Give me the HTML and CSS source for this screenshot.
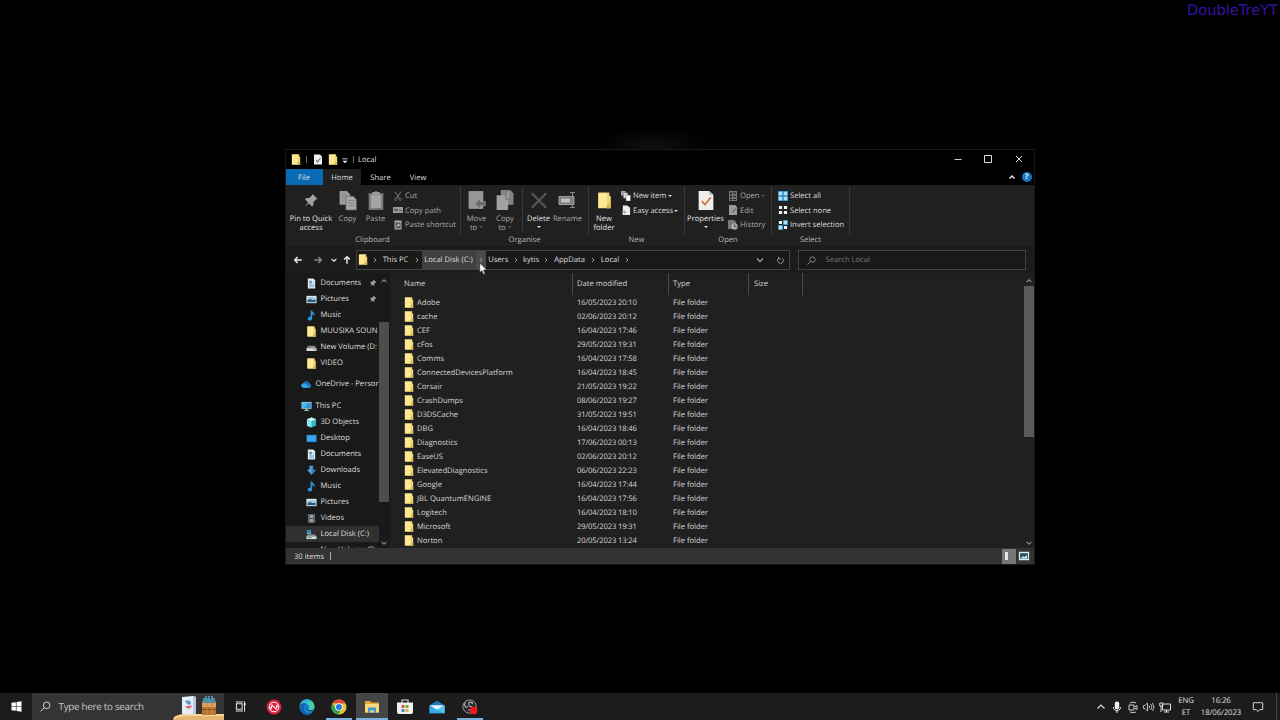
FILE: index.html
```html
<!DOCTYPE html>
<html lang="en">
<head>
<meta charset="utf-8">
<title>Local</title>
<link rel="stylesheet" href="styles.css">
</head>
<body>
<svg class="defs" width="0" height="0">
  <symbol id="folder" viewBox="0 0 10 11"><path d="M.8.2h7.400v2.200l1 .3v8H.8z" fill="#f0d676"/><path d="M1 .8h5.600v9.400H1z" fill="#fde995"/><path d="M7 8h2.200v2.700H6z" fill="#d9b64c"/></symbol>
  <symbol id="doc" viewBox="0 0 12 12"><path d="M2 .5h6l2 2v9H2z" fill="#e6eef3"/><path d="M3.500 3h3v3h-3zM7.500 4h1.500v1H7.500zM3.500 7.200H9v1H3.500zM3.500 9.200H9v1H3.500z" fill="#5a9cc4"/></symbol>
  <symbol id="picture" viewBox="0 0 12 12"><path d="M.5 2h11v8H.5z" fill="#e8eef2"/><path d="M1.500 3h9v6h-9z" fill="#a9cfe6"/><path d="m1.500 7 3-2 2 1.500 4-.6V9h-9z" fill="#2e5d80"/></symbol>
  <symbol id="music" viewBox="0 0 12 12"><path d="M5 .5h1.800c0 2 3.400 2.700 3 6.200C9.200 5.300 8 5 6.800 5v4.400a2.500 2.100 0 1 1-1.800-2z" fill="#2a93d8"/></symbol>
  <symbol id="drive" viewBox="0 0 12 12"><path d="M2.500 4h7l2 3H.5z" fill="#8b8b8b"/><path d="M.5 6.800h11v3H.5z" fill="#dedede"/><path d="M8.500 8h2v.8h-2z" fill="#478"/></symbol>
  <symbol id="cdrive" viewBox="0 0 12 12"><path d="M1 1h2v2H1zM3.500 1h2v2h-2z" fill="#36a9df"/><path d="M1 3.500h2v2H1zM3.500 3.500h2v2h-2z" fill="#62c5ed"/><path d="M2 6h7l2.500 2H.5z" fill="#8c9c98"/><path d="M.5 8h11v3H.5z" fill="#cfe2da"/><path d="M2 9h4v1H2z" fill="#37806b"/></symbol>
  <symbol id="cloud" viewBox="0 0 12 12"><path d="M3 9.500a2.500 2.500 0 0 1-.3-5 3.500 3.500 0 0 1 6.500 0A2.600 2.600 0 0 1 9.500 9.500z" fill="#1370b8"/><path d="M3 9.500a2.500 2.500 0 0 1-.3-5c2 0 4 1.800 7.500 4.900z" fill="#36a8ea"/></symbol>
  <symbol id="pc" viewBox="0 0 12 12"><path d="M.5 1h11v7.500H.5z" fill="#a7cfe0"/><path d="M1.300 1.800h9.400V7.600H1.300z" fill="#2b95d6"/><path d="M1.300 1.800h6l-4 5.800h-2z" fill="#55b8ee"/><path d="M5 8.500h2V10h2v1H3v-1h2z" fill="#a9c3cf"/></symbol>
  <symbol id="cube" viewBox="0 0 12 12"><path d="m1 2.500 5-2 5 2v7l-5 2-5-2z" fill="#2bb5bd"/><path d="m1 2.500 5 2v7l-5-2z" fill="#8ce4e4"/><path d="m1 2.500 5-2 5 2-5 2z" fill="#d5f8f5"/></symbol>
  <symbol id="desktop" viewBox="0 0 12 12"><path d="M.5 2h11v8H.5z" fill="#1d80ce"/><path d="M1 2.500h10V9H1z" fill="#37a5ec"/></symbol>
  <symbol id="down" viewBox="0 0 12 12"><path d="M4 .8h4v4.500H11.200L6 11 .8 5.300H4z" fill="#3784be"/><path d="M4 .8h2V10L1.800 5.300H4z" fill="#5ba9dd"/></symbol>
  <symbol id="video" viewBox="0 0 12 12"><path d="M2 1h8v10H2z" fill="#484d54"/><path d="M4 2h4v3.500H4zM4 6.500h4V10H4z" fill="#92a2ad"/><path d="M2.500 2h.8v1h-.8zm0 3h.8v1h-.8zm0 3h.8v1h-.8zM8.700 2h.8v1h-.8zm0 3h.8v1h-.8zm0 3h.8v1h-.8z" fill="#bbb"/></symbol>
  <symbol id="pin" viewBox="0 0 16 16"><path d="m9.500 1.500 5 5-1.500.6-2.500 2.500v3L9 14 5.900 10.900 1.500 14.500l3.600-4.400L2 7l1.400-1.500h3l2.500-2.500z" fill="#a1a1a1"/></symbol>
  <symbol id="copy" viewBox="0 0 18 20"><path d="M1 1h7l3 3v10H1z" fill="#9b9b9b"/><path d="M7 6h7l3 3v10H7z" fill="#a8a8a8" stroke="#666" stroke-width=".7"/><path d="M9 10h6M9 12.500h6M9 15h6M3 4h5M3 6.500h3" stroke="#828282" stroke-width=".8"/></symbol>
  <symbol id="paste" viewBox="0 0 16 20"><path d="M1 3h14v16H1z" fill="#777"/><path d="M3 5h10v12H3z" fill="#a4a4a4"/><path d="M4.500 2h2.300q1.200-2 2.400 0h2.300v3h-7z" fill="#999"/></symbol>
  <symbol id="cut" viewBox="0 0 10 10"><path d="m2 .5 4.500 7M8 .5l-4.500 7" stroke="#777" fill="none"/><circle cx="2.700" cy="8.300" r="1.200" fill="none" stroke="#777" stroke-width=".8"/><circle cx="7.300" cy="8.300" r="1.200" fill="none" stroke="#777" stroke-width=".8"/></symbol>
  <symbol id="path" viewBox="0 0 10 10"><path d="M0 2h10v6H0z" fill="#999"/><path d="m1.500 4 .8 2 .8-2 .8 2 .8-2M6 5.500h3" stroke="#444" fill="none" stroke-width=".8"/></symbol>
  <symbol id="shortcut" viewBox="0 0 10 10"><path d="M1.500.5h7v9h-7z" fill="#aaa"/><path d="M2.500 2.500h5v5.800h-5z" fill="#555"/><path d="M3.200 7.500c0-2 1-3 2.200-3v-1L7 5 5.400 6.500v-1c-1 0-1.500.7-2.200 2z" fill="#ddd"/></symbol>
  <symbol id="moveto" viewBox="0 0 18 20"><path d="M1 1h14v17H1z" fill="#969696"/><path d="m7 13 5-5v3h5v4h-5v3z" fill="#6a6a6a" stroke="#aaa" stroke-width=".5"/></symbol>
  <symbol id="copyto" viewBox="0 0 18 20"><path d="M5 0h9l3 3v11H5z" fill="#858585"/><path d="M1 5h8l3 3v11H1z" fill="#a1a1a1"/><path d="M10 1h4v8h-4z" fill="#999" stroke="#666" stroke-width=".6"/></symbol>
  <symbol id="delete" viewBox="0 0 18 18"><path d="m2.500 2.500 13 13M15.500 2.500l-13 13" stroke="#555" stroke-width="2"/></symbol>
  <symbol id="rename" viewBox="0 0 20 18"><path d="M1 5h15v8H1z" fill="#777" stroke="#a2a2a2"/><path d="M3 7h9v4H3z" fill="#c1c1c1"/><path d="M12 1h5M14.500 1v15M12 16h5" stroke="#888" stroke-width="1.200"/></symbol>
  <symbol id="newitem" viewBox="0 0 11 11"><path d="M0 0h5v5H0z" fill="#aaa"/><path d="M2.500 2h5v6h-5z" fill="#ddd" stroke="#555" stroke-width=".5"/><path d="M5.500 4.500h5V11h-5z" fill="#fff" stroke="#555" stroke-width=".5"/></symbol>
  <symbol id="easy" viewBox="0 0 11 11"><path d="M2 .5h5l3 2.500v8H2z" fill="#eee"/><path d="M1 10c0-3 2-3 3-3V5.500L6 8 4 10V9C3 9 2 9 1 10z" fill="#aaa"/></symbol>
  <symbol id="props" viewBox="0 0 16 20"><path d="M1 1h10l4 3.500V19H1z" fill="#f2eeeb"/><path d="M11 1v3.500h4" fill="#bbb"/><path d="m4 10.500 3 3.500 5.500-7" fill="none" stroke="#d37548" stroke-width="1.700"/></symbol>
  <symbol id="open" viewBox="0 0 10 10"><path d="M1 0h8v10H1z" fill="#777"/><path d="M2 1.500h2v2H2zm0 3.200h2v2H2zM2 8h2v1.300H2zM5 1.500h3v1.300H5zm0 3.200h3v1.300H5zM5 8h3v1H5z" fill="#222"/></symbol>
  <symbol id="edit" viewBox="0 0 10 10"><path d="M1 0h6l2 2v8H1z" fill="#999"/><path d="m3 9 1-3 4-4 1.500 1.500-4 4z" fill="#777" stroke="#bbb" stroke-width=".4"/></symbol>
  <symbol id="history" viewBox="0 0 10 10"><path d="M0 0h6l2 2v7H0z" fill="#777"/><circle cx="6.500" cy="6.500" r="3.200" fill="#aaa"/><path d="M6.500 4.500v2h2" fill="none" stroke="#333" stroke-width=".7"/></symbol>
  <symbol id="selall" viewBox="0 0 11 11"><path d="M0 0h11v11H0z" fill="#2a89c0"/><path d="M.8.8h3.900v3.900H.8zM6.300.8h3.900v3.900H6.300zM.8 6.300h3.900v3.900H.8zM6.300 6.300h3.900v3.900H6.300z" fill="#b2e1f6"/></symbol>
  <symbol id="selnone" viewBox="0 0 11 11"><path d="M1 1h3.500v3.500H1zM6.500 1H10v3.500H6.500zM1 6.500h3.500V10H1zM6.500 6.500H10V10H6.500z" fill="#f0f0f0"/></symbol>
  <symbol id="selinv" viewBox="0 0 11 11"><path d="M5.500 0H11v5.500H5.500zM0 5.500h5.500V11H0z" fill="#2a89c0"/><path d="M1 1h3.500v3.500H1zM6.500 6.500H10V10H6.500z" fill="#f0f0f0"/><path d="M6.300.8h3.900v3.900H6.300zM.8 6.300h3.900v3.900H.8z" fill="#b2e1f6"/></symbol>
  <symbol id="left" viewBox="0 0 12 12"><path d="M10.500 6H2.200M5.500 2.500 2 6l3.500 3.500" fill="none" stroke="currentColor" stroke-width="1.700"/></symbol>
  <symbol id="cdown" viewBox="0 0 10 10"><path d="m2 3.500 3 3 3-3" fill="none" stroke="currentColor" stroke-width="1.400"/></symbol>
  <symbol id="sep" viewBox="0 0 10 10"><path d="m4 3 2 2-2 2" fill="none" stroke="currentColor"/></symbol>
  <symbol id="lens" viewBox="0 0 12 12"><circle cx="7.300" cy="4.700" r="3.600" fill="none" stroke="currentColor"/><path d="m4.700 7.300-4 4" stroke="currentColor"/></symbol>
</svg>

<div class="screen">
  <div class="glow"></div>
  <div class="watermark">DoubleTreYT</div>

  <main class="window">
    <header class="titlebar">
      <svg class="i10 t1"><use href="#folder"/></svg>
      <i class="tsep"></i>
      <svg class="i10 t2" viewBox="0 0 10 11"><path d="M1 .5h6l2 2v8H1z" fill="#f3eff0"/><path d="m3 6 1.500 2L7.500 4" fill="none" stroke="#866" stroke-width="1.100"/></svg>
      <svg class="i10 t3"><use href="#folder"/></svg>
      <svg class="t4" viewBox="0 0 6 6"><path d="M.5.800h5" stroke="#ddd" stroke-width=".9"/><path d="M.5 2.700h5L3 5.200z" fill="#eee"/></svg>
      <i class="tsep t5"></i>
      <span class="title">Local</span>
      <div class="winbtns">
        <svg viewBox="0 0 10 10"><path d="M1.500 5.500h7" stroke="#ccc"/></svg>
        <svg viewBox="0 0 10 10"><path d="M1.500 1.500h7v7h-7z" fill="none" stroke="#ddd"/></svg>
        <svg viewBox="0 0 10 10"><path d="m2 2 6 6M8 2 2 8" stroke="#ddd"/></svg>
      </div>
    </header>

    <nav class="tabs">
      <span class="tab file">File</span><span class="tab home">Home</span><span class="tab">Share</span><span class="tab view">View</span>
      <div class="help">
        <svg viewBox="0 0 10 10"><path d="m2.500 6.500 2.500-2.500 2.500 2.500" fill="none" stroke="#ddd" stroke-width="1.500"/></svg>
        <span class="q">?</span>
      </div>
    </nav>

    <section class="ribbon">
      <div class="group g1">
        <div class="tools">
          <div class="big lit"><svg class="bpin"><use href="#pin"/></svg><span>Pin to Quick</span><span>access</span></div>
          <div class="big"><svg><use href="#copy"/></svg><span>Copy</span></div>
          <div class="big"><svg><use href="#paste"/></svg><span>Paste</span></div>
          <div class="small dim"><p><svg><use href="#cut"/></svg>Cut</p><p><svg><use href="#path"/></svg>Copy path</p><p><svg><use href="#shortcut"/></svg>Paste shortcut</p></div>
        </div>
        <div class="glabel">Clipboard</div>
      </div>
      <div class="group g2">
        <div class="tools">
          <div class="big"><svg><use href="#moveto"/></svg><span>Move</span><span>to <b class="car off"></b></span></div>
          <div class="big"><svg><use href="#copyto"/></svg><span>Copy</span><span>to <b class="car off"></b></span></div>
          <i class="gsep"></i>
          <div class="big lit"><svg><use href="#delete"/></svg><span>Delete</span><span><b class="car"></b></span></div>
          <div class="big"><svg><use href="#rename"/></svg><span>Rename</span></div>
        </div>
        <div class="glabel">Organise</div>
      </div>
      <div class="group g3">
        <div class="tools">
          <div class="big lit"><svg class="bfolder"><use href="#folder"/></svg><span>New</span><span>folder</span></div>
          <div class="small"><p><svg><use href="#newitem"/></svg>New item <b class="car"></b></p><p><svg><use href="#easy"/></svg>Easy access <b class="car"></b></p></div>
        </div>
        <div class="glabel">New</div>
      </div>
      <div class="group g4">
        <div class="tools">
          <div class="big lit"><svg><use href="#props"/></svg><span>Properties</span><span><b class="car"></b></span></div>
          <div class="small dim"><p><svg><use href="#open"/></svg>Open <b class="car off"></b></p><p><svg><use href="#edit"/></svg>Edit</p><p><svg><use href="#history"/></svg>History</p></div>
        </div>
        <div class="glabel">Open</div>
      </div>
      <div class="group g5">
        <div class="tools">
          <div class="small"><p><svg><use href="#selall"/></svg>Select all</p><p><svg><use href="#selnone"/></svg>Select none</p><p><svg><use href="#selinv"/></svg>Invert selection</p></div>
        </div>
        <div class="glabel">Select</div>
      </div>
    </section>

    <section class="address">
      <div class="navs">
        <svg><use href="#left"/></svg><svg class="fwd"><use href="#left"/></svg><svg class="recent"><use href="#cdown"/></svg><svg class="up"><use href="#left"/></svg>
      </div>
      <div class="crumbs">
        <svg class="i10"><use href="#folder"/></svg>
        <svg class="s"><use href="#sep"/></svg><span class="c1">This PC</span>
        <svg class="s"><use href="#sep"/></svg><span class="c2">Local Disk (C:)</span>
        <svg class="s hot"><use href="#sep"/></svg><span class="c3">Users</span>
        <svg class="s"><use href="#sep"/></svg><span class="c4">kytis</span>
        <svg class="s"><use href="#sep"/></svg><span class="c5">AppData</span>
        <svg class="s"><use href="#sep"/></svg><span class="c6">Local</span>
        <svg class="s"><use href="#sep"/></svg>
        <svg class="drop"><use href="#cdown"/></svg>
        <svg class="refresh" viewBox="0 0 10 10"><path d="M3 2.500a3.200 3.200 0 1 0 4 0M3 .8v2.400h2.400" fill="none" stroke="#999" stroke-width="1.100"/></svg>
      </div>
      <div class="search"><svg><use href="#lens"/></svg>Search Local</div>
    </section>

    <section class="content">
      <aside class="side">
        <div class="tree">
          <p><svg><use href="#doc"/></svg>Documents<svg class="pinned"><use href="#pin"/></svg></p>
          <p><svg><use href="#picture"/></svg>Pictures<svg class="pinned"><use href="#pin"/></svg></p>
          <p><svg><use href="#music"/></svg>Music</p>
          <p><svg><use href="#folder"/></svg>MUUSIKA SOUN</p>
          <p><svg><use href="#drive"/></svg>New Volume (D:</p>
          <p><svg><use href="#folder"/></svg>VIDEO</p>
          <p class="root r1"><svg><use href="#cloud"/></svg>OneDrive - Persor</p>
          <p class="root r2"><svg><use href="#pc"/></svg>This PC</p>
          <p><svg><use href="#cube"/></svg>3D Objects</p>
          <p><svg><use href="#desktop"/></svg>Desktop</p>
          <p><svg><use href="#doc"/></svg>Documents</p>
          <p><svg><use href="#down"/></svg>Downloads</p>
          <p><svg><use href="#music"/></svg>Music</p>
          <p><svg><use href="#picture"/></svg>Pictures</p>
          <p><svg><use href="#video"/></svg>Videos</p>
          <p class="sel"><svg><use href="#cdrive"/></svg>Local Disk (C:)</p>
          <p class="last"><svg></svg>New Volume (D:</p>
        </div>
        <div class="bar sbar"><svg class="flip"><use href="#cdown"/></svg><i></i><svg><use href="#cdown"/></svg></div>
      </aside>
      <div class="list">
        <div class="row head"><span>Name</span><span>Date modified</span><span>Type</span><span>Size</span></div>
        <div class="row"><span><svg><use href="#folder"/></svg>Adobe</span><span>16/05/2023 20:10</span><span>File folder</span></div>
        <div class="row"><span><svg><use href="#folder"/></svg>cache</span><span>02/06/2023 20:12</span><span>File folder</span></div>
        <div class="row"><span><svg><use href="#folder"/></svg>CEF</span><span>16/04/2023 17:46</span><span>File folder</span></div>
        <div class="row"><span><svg><use href="#folder"/></svg>cFos</span><span>29/05/2023 19:31</span><span>File folder</span></div>
        <div class="row"><span><svg><use href="#folder"/></svg>Comms</span><span>16/04/2023 17:58</span><span>File folder</span></div>
        <div class="row"><span><svg><use href="#folder"/></svg>ConnectedDevicesPlatform</span><span>16/04/2023 18:45</span><span>File folder</span></div>
        <div class="row"><span><svg><use href="#folder"/></svg>Corsair</span><span>21/05/2023 19:22</span><span>File folder</span></div>
        <div class="row"><span><svg><use href="#folder"/></svg>CrashDumps</span><span>08/06/2023 19:27</span><span>File folder</span></div>
        <div class="row"><span><svg><use href="#folder"/></svg>D3DSCache</span><span>31/05/2023 19:51</span><span>File folder</span></div>
        <div class="row"><span><svg><use href="#folder"/></svg>DBG</span><span>16/04/2023 18:46</span><span>File folder</span></div>
        <div class="row"><span><svg><use href="#folder"/></svg>Diagnostics</span><span>17/06/2023 00:13</span><span>File folder</span></div>
        <div class="row"><span><svg><use href="#folder"/></svg>EaseUS</span><span>02/06/2023 20:12</span><span>File folder</span></div>
        <div class="row"><span><svg><use href="#folder"/></svg>ElevatedDiagnostics</span><span>06/06/2023 22:23</span><span>File folder</span></div>
        <div class="row"><span><svg><use href="#folder"/></svg>Google</span><span>16/04/2023 17:44</span><span>File folder</span></div>
        <div class="row"><span><svg><use href="#folder"/></svg>JBL QuantumENGINE</span><span>16/04/2023 17:56</span><span>File folder</span></div>
        <div class="row"><span><svg><use href="#folder"/></svg>Logitech</span><span>16/04/2023 18:10</span><span>File folder</span></div>
        <div class="row"><span><svg><use href="#folder"/></svg>Microsoft</span><span>29/05/2023 19:31</span><span>File folder</span></div>
        <div class="row"><span><svg><use href="#folder"/></svg>Norton</span><span>20/05/2023 13:24</span><span>File folder</span></div>
      </div>
      <div class="bar lbar"><svg class="flip"><use href="#cdown"/></svg><i></i><svg><use href="#cdown"/></svg></div>
    </section>

    <footer class="status">
      <span>30 items</span><i></i>
      <div class="views"><b><svg viewBox="0 0 14 14"><path d="M3 3h3v8H3z" fill="#e4e4e4"/></svg></b><svg viewBox="0 0 12 12"><path d="M1.500 2.500h9v7h-9z" fill="#264b5b" stroke="#dcebf0" stroke-width="1.300"/><path d="m3 8 2-2 1.500 1L9 5v3.500H3z" fill="#cfe8ee"/></svg></div>
    </footer>
  </main>

  <svg class="cursor" viewBox="0 0 9 14"><path d="M.7.7v10l2.200-2 1.600 3.800 1.700-.7-1.600-3.700h3.100z" fill="#fff" stroke="#222" stroke-width=".7"/></svg>

  <footer class="taskbar">
    <div class="start"><svg viewBox="0 0 12 12"><path d="m.5 2 4.800-.7v4.300H.5zM6 1.200 11.500.4v5.200H6zM.5 6.300h4.800v4.400l-4.800-.7zM6 6.300h5.500v5.300L6 10.800z" fill="#fff"/></svg></div>
    <div class="find"><svg class="lens"><use href="#lens"/></svg><span>Type here to search</span>
      <svg class="art" viewBox="0 0 52 27"><path d="M1 27c0-4 6-6 14-6h37v6z" fill="#e3b673"/><path d="M2 24c4-2 8-3 13-3h37v2H16C9 23 6 24 2 26z" fill="#f8d89a"/><path d="m10 4 11-1 3 1v17H10z" fill="#e5edf7"/><path d="M21 3l3 1v17h-3z" fill="#bcc7dd"/><path d="M13 8c3-2 6 0 6 2s-3 2-4 1z" fill="#5b9bd0"/><path d="M13 13c2 4 6 3 7 0-2-2-3 1-7 0z" fill="#dc7373"/><path d="M30 8h14v14H30z" fill="#b87332"/><path d="M30 10h14v4H30z" fill="#e0a05a"/><path d="M30 16h14v1H30z" fill="#814b22"/><path d="M35 8v14M40 8v14" stroke="#c98543"/><path d="M31 10V5h2V3h2v2h1V3h2v3h1V3h2v2h2v5z" fill="#4f8fa9"/></svg>
    </div>
    <div class="app tv"><svg viewBox="0 0 16 16"><path d="M3 4.500h7v7H3zM3 1.500v1h7v-1M3 14.500v-1h7v1M13 1.500v13" fill="none" stroke="#ddd" stroke-width="1.300"/><path d="M12 4h2.200v2.500H12z" fill="#eee"/></svg></div>
    <div class="apps">
      <div class="app"><svg viewBox="0 0 16 16"><circle cx="8" cy="8" r="7.500" fill="#d8213f"/><circle cx="8" cy="8" r="4.800" fill="none" stroke="#fff"/><path d="m5 10.500 1-4.500 4 4 1-4.500M3.500 8.500h2M10.500 7.500h2" fill="none" stroke="#fff" stroke-width="1.100"/></svg></div>
      <div class="app"><svg viewBox="0 0 18 18"><circle cx="9" cy="9" r="8.500" fill="#1785d4"/><path d="M1 7C2 2 6 .5 9 .5c6 0 9 5 8.500 9-.5 3-6 4-7 2 3-3-1-7-5-6C3 6 2 6.500 1 7z" fill="#43d1a5"/><path d="M1 7C2 2 6 .5 9 .5c3 0 5 1 6.500 3-4-1-6 0-10 2C3 6 2 6.500 1 7z" fill="#32b5d8"/><path d="M.5 9c1-4 5-6 9-3-4 0-5 6-2 9 3 2 6 1 8-1-3 5-9 5-12 1.500C1 13.500.5 11 .5 9z" fill="#1763b2"/><path d="M8.500 7.500c-1 2 0 4 2 5 2 .8 4 .5 6-.5l-.8 1.500C10 14.500 6.500 11 8.500 7.500z" fill="#1a1f27"/></svg></div>
      <div class="app run"><svg viewBox="0 0 18 18"><circle cx="9" cy="9" r="8.500" fill="#eac235"/><path d="M1.600 4.700A8.500 8.500 0 0 1 16.400 5H9z" fill="#e0463c"/><path d="M1.600 4.700A8.500 8.500 0 0 0 8 17.500L12 11 5 10z" fill="#2fa350"/><circle cx="9" cy="9" r="4.300" fill="#fff"/><circle cx="9" cy="9" r="3.400" fill="#2e79df"/></svg></div>
      <div class="app run active"><svg viewBox="0 0 16 16"><path d="M1 2h5l1.500 1.500H15v10H1z" fill="#e2a72f"/><path d="M1 5h14v8.500H1z" fill="#f8d978"/><path d="M4 8.500h8V14h-2v-2.500H6V14H4z" fill="#4399d1"/></svg></div>
      <div class="app"><svg viewBox="0 0 16 16"><path d="M5 4V1h6v3" fill="none" stroke="#ddd" stroke-width="1.200"/><path d="M0 3.500h16V13q0 2-2 2H2q-2 0-2-2z" fill="#f0f2ec"/><path d="M4.500 6h3v3h-3z" fill="#dd5b40"/><path d="M8.500 6h3v3h-3z" fill="#70ad43"/><path d="M4.500 10h3v3h-3z" fill="#398fcb"/><path d="M8.500 10h3v3h-3z" fill="#e1b23e"/></svg></div>
      <div class="app"><svg viewBox="0 0 18 16"><path d="m.5 6 8.500-5 8.500 5v9H.5z" fill="#2079b8"/><path d="M2 6h14v4l-7 3-7-3z" fill="#edf5fa"/><path d="m.5 6 8.500 5 8.500-5v9H.5z" fill="#35a8e5"/><path d="m9 11 8.500-5v9z" fill="#58c4f0"/></svg></div>
      <div class="app run"><svg viewBox="0 0 18 18"><circle cx="8.500" cy="8.500" r="7.500" fill="#25242a" stroke="#aaa"/><path d="M8 7C6 2 12 3 12 6M7 8c-4 4-5-2-3-4M8 8c5 0 3 6-1 4" fill="none" stroke="#bbb" stroke-width="1.200"/><circle cx="13" cy="12.800" r="4.300" fill="#ec1b1b"/></svg></div>
    </div>
    <div class="tray">
      <svg viewBox="0 0 12 12"><path d="m2.500 7.500 3.500-3.500 3.500 3.500" fill="none" stroke="#ddd" stroke-width="1.200"/></svg>
      <svg viewBox="0 0 12 12"><rect x="3.800" y=".5" width="4.400" height="8" rx="2" fill="#eee"/><path d="M2.500 6c0 5 7 5 7 0M6 10v2" fill="none" stroke="#eee"/></svg>
      <svg viewBox="0 0 12 12"><path d="M2 4h5v5H2zM7.500 6 10 4.500v4L7.500 7M3 2q3-2 6 0M3 11q3 1.500 6 0" fill="none" stroke="#ccc"/></svg>
      <svg viewBox="0 0 12 12"><path d="M.5 4.500H2L4.500 2v8L2 7.500H.5zM6 4.500q1.200 1.500 0 3M7.700 3q2.500 3 0 6M9.500 2q3 4 0 8" fill="none" stroke="#ccc" stroke-width=".9"/></svg>
      <svg viewBox="0 0 12 12"><path d="M3.500 3h8v6h-8zM5 11h5M7.500 9v2M.8 2h3v3h-3zM2 5v6" fill="none" stroke="#ddd"/></svg>
      <div class="two lang"><span>ENG</span><span>ET</span></div>
      <div class="two clock"><span>16:26</span><span>18/06/2023</span></div>
      <svg class="note" viewBox="0 0 14 14"><path d="M1.500 2h11v8H9l-2 2.300L5 10H1.500z" fill="none" stroke="#ddd" stroke-width="1.100"/></svg>
    </div>
  </footer>
</div>
</body>
</html>
```
FILE: styles.css
```css
* { box-sizing: border-box; }
body { margin: 0; background: #000; }
p { margin: 0; }
svg { display: block; flex: none; overflow: visible; }
i { display: block; flex: none; }
.defs { position: absolute; }
.screen {
  position: relative; width: 1280px; height: 720px; overflow: hidden; background: #000;
  font: 7.6px/10px "Open Sans", "Noto Sans", sans-serif; color: #dedede;
  text-rendering: geometricPrecision; white-space: nowrap;
  display: flex; flex-direction: column; justify-content: space-between;
}
.glow { position: absolute; left: 592px; top: 126px; width: 122px; height: 40px; background: radial-gradient(ellipse, #0f0f0f, #000 70%); }
.watermark { position: absolute; right: 2px; top: 1px; font: 14.6px/20px "DejaVu Sans", sans-serif; color: #3512a4; }
.window {
  position: relative; width: 750px; height: 416px; margin: 149px 0 0 285px; background: #202020;
  outline: 1px solid #181818; outline-offset: -1px; display: flex; flex-direction: column; overflow: hidden;
}

.titlebar { height: 20px; background: #000; display: flex; align-items: center; }
.i10 { width: 10px; height: 11px; }
.t1 { margin-left: 6px; }
.tsep { width: 1px; height: 7px; background: #666; margin-left: 5px; }
.t2 { margin-left: 6px; }
.t3 { margin-left: 5px; }
.t4 { width: 6px; height: 6px; margin: 3px 0 0 4px; }
.t5 { margin-left: 5px; }
.title { margin: 1px 0 0 4px; }
.winbtns { margin-left: auto; display: flex; gap: 20.5px; padding-right: 11.5px; }
.winbtns svg { width: 10px; height: 10px; }

.tabs { height: 16px; background: #000; display: flex; line-height: 18px; }
.tab { width: 39px; height: 16px; text-align: center; }
.file { width: 38px; background: #0869b5; }
.home { background: #202020; width: 38px; }
.view { width: 36px; }
.help { margin-left: auto; display: flex; align-items: center; gap: 5px; padding-right: 3.5px; }
.help svg { width: 10px; height: 10px; }
.q { width: 10px; height: 10px; border-radius: 50%; background: #1677c4; color: #fff; font-weight: 700; line-height: 10px; text-align: center; }

.ribbon { height: 62px; display: flex; border-bottom: 1px solid #191919; }
.group { position: relative; display: flex; flex-direction: column; flex: none; }
.group::after { content: ""; position: absolute; right: 0; top: 2px; width: 1px; height: 48px; background: #383838; }
.g1 { width: 176px; } .g2 { width: 128px; } .g3 { width: 96px; } .g4 { width: 87px; } .g5 { width: 78px; }
.tools { height: 49px; display: grid; }
.g1 .tools { grid-template-columns: 52px 21px 35px auto; }
.g2 .tools { grid-template-columns: 31px 26px 5px 31px 27px; }
.g3 .tools { grid-template-columns: 30px auto; }
.g4 .tools { grid-template-columns: 41px auto; }
.glabel { text-align: center; line-height: 12px; padding: 1.6px 1px 0 0; color: #b5b5b5; }
.big { display: flex; flex-direction: column; align-items: center; padding-top: 5px; color: #aaa; line-height: 9px; min-width: 0; }
.big svg { width: 20px; height: 21px; margin-bottom: 3.5px; }
.big .bpin { width: 16px; }
.big .bfolder { width: 15px; }
.big span { min-height: 9px; }
.lit { color: #e2e2e2; }
.car { display: inline-block; border: 2px solid transparent; border-top-color: currentColor; border-bottom: 0; vertical-align: 2px; }
.off { color: #555; }
.gsep { width: 1px; height: 44px; margin-top: 3px; margin-left: 4px; background: #383838; }
.small { padding-top: 3.7px; }
.small p { height: 14.7px; display: flex; align-items: center; gap: 2px; line-height: 14px; }
.small svg { width: 10px; height: 10px; margin-bottom: 1px; }
.small .car { margin-left: -.5px; }
.g3 .small { padding-left: 2px; letter-spacing: -.08px; } .g4 .small { padding-left: 2px; } .g5 .small { padding-left: 6px; }
.dim { color: #aaa; }

.address { height: 26px; display: flex; align-items: center; background: #1c1c1c; }
.navs { width: 71px; display: flex; align-items: center; padding-left: 8px; }
.navs svg { width: 10px; height: 10px; color: #eee; }
.navs .fwd { transform: scaleX(-1); margin-left: 10px; color: #888; }
.navs .recent { width: 8px; height: 8px; margin-left: 7px; }
.navs .up { transform: rotate(90deg); margin-left: 4px; }
.crumbs { width: 434px; height: 20px; border: 1px solid #414141; background: #191919; display: flex; align-items: center; padding-left: 1px; line-height: 19px; }
.s { width: 10px; height: 18px; color: #999; }
.crumbs .i10 { margin: 0 1.5px 1px 0; }
.c1 { width: 32px; text-align: center; }
.c2 { width: 54px; height: 18px; text-align: center; background: #404040; }
.hot { background: #4b4b4b; }
.c3 { width: 25.5px; text-align: center; }
.c4 { width: 20px; text-align: center; }
.c5 { width: 37px; text-align: center; }
.c6 { width: 24px; text-align: center; }
.crumbs .drop { width: 10px; height: 10px; margin-left: auto; color: #999; }
.refresh { width: 9px; height: 9px; margin: 0 4px 0 11px; }
.search { width: 228px; height: 20px; margin-left: 8px; border: 1px solid #414141; background: #191919; display: flex; align-items: center; gap: 9.5px; padding-left: 8px; color: #777; line-height: 19px; }
.search svg { width: 9px; height: 9px; color: #aaa; }

.content { height: 275px; display: flex; overflow: hidden; }
.side { width: 105px; display: flex; background: #191919; flex: none; }
.tree { width: 94px; height: 275px; padding-top: 2px; overflow: hidden; }
.tree p { height: 16px; line-height: 16px; padding-left: 21px; display: flex; align-items: center; gap: 3.5px; overflow: hidden; }
.tree svg { width: 11px; height: 11px; }
.tree .root { padding-left: 16px; }
.r1 { margin-top: 5px; }
.r2 { margin-top: 6px; }
.tree .pinned { width: 8px; height: 8px; margin: 0 2px 0 auto; }
.sel { background: #303030; }
.bar { display: flex; flex-direction: column; align-items: center; padding: 4px 0 1px; }
.bar svg { width: 8px; height: 8px; color: #888; }
.flip { transform: scaleY(-1); }
.bar svg:last-child { margin-top: auto; }
.bar i { width: 10px; background: #4d4d4d; }
.sbar { width: 10px; }
.sbar i { height: 180px; margin-top: 37px; }
.lbar { width: 12px; margin-left: auto; }
.lbar i { height: 151px; margin-top: 1px; background: #5a5a5a; }
.list { width: 420px; padding-left: 14px; }
.row { display: grid; grid-template-columns: 173px 96px 80px 50px; height: 14px; line-height: 14px; color: #d5d5d5; }
.row span { display: flex; align-items: center; gap: 3px; }
.row svg { width: 10px; height: 11px; margin-bottom: 1px; }
.row span:nth-child(2) { letter-spacing: -.12px; }
.head { height: 22.6px; line-height: 20px; padding-bottom: 1px; }
.head span { border-right: 1px solid #4a4a4a; margin-right: 4px; }
.row.head span:nth-child(2) { letter-spacing: 0; }
.head span:last-child { margin-right: 0; padding-left: 1px; }

.status { height: 16px; background: #333; display: flex; align-items: center; padding-left: 9px; margin: 0 1px 1px 0; line-height: 12px; }
.status > span { padding-top: 1px; }
.status > i { width: 1px; height: 8px; background: #aaa; margin-left: 6px; }
.views { margin-left: auto; display: flex; align-items: center; }
.views b { background: #777; width: 14px; height: 15px; }
.views svg { width: 14px; height: 14px; }
.views > svg { width: 12px; height: 12px; margin: 0 4px 0 2px; }
.cursor { position: absolute; left: 479px; top: 262px; width: 9px; height: 14px; }

.taskbar { height: 27px; background: #1c1c1c; display: flex; align-items: stretch; font-size: 8px; }
.start { width: 32px; display: grid; place-items: center; }
.start svg { width: 11px; height: 11px; }
.find { width: 192px; background: #343434; display: flex; align-items: center; }
.find .lens { width: 11px; height: 11px; margin-left: 8px; color: #ddd; }
.find span { margin: 1.5px 0 0 7.5px; font-size: 9.8px; letter-spacing: -.26px; color: #c8c8c8; }
.find .art { width: 52px; height: 27px; margin-left: auto; overflow: hidden; }
.app { width: 32px; display: grid; place-items: center; flex: none; }
.app svg { width: 16px; height: 16px; }
.tv svg { width: 13px; height: 13px; }
.apps { display: flex; gap: .67px; margin-left: 2px; }
.run { background: linear-gradient(#78b0de, #78b0de) center bottom / 26px 2px no-repeat; }
.run.active { background: linear-gradient(#78b0de, #78b0de) center bottom / 32px 2px no-repeat #454545; }
.tray { margin-left: auto; display: flex; align-items: center; gap: 4px; border-right: 1px solid #444; margin-right: 3px; padding-right: 12px; }
.tray svg { width: 12px; height: 12px; }
.two { display: flex; flex-direction: column; text-align: center; line-height: 12px; font-size: 7.8px; letter-spacing: -.1px; padding-top: 1px; }
.lang { width: 18px; margin-left: 2px; }
.clock { width: 42px; margin: 0 6px 0 1px; align-items: center; }
```
